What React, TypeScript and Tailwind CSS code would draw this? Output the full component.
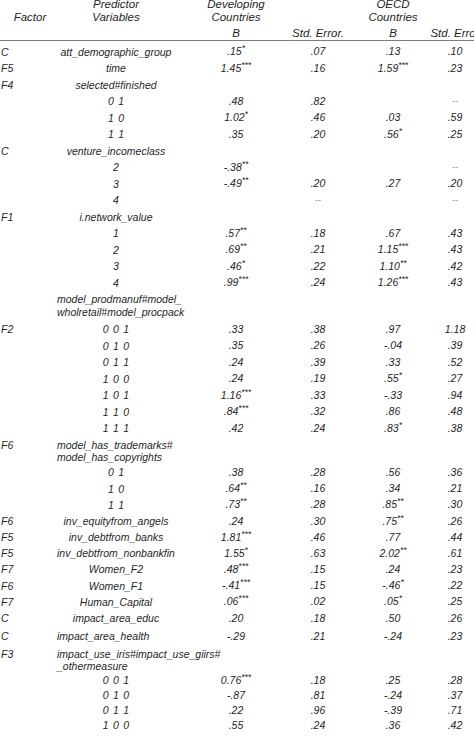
import React from 'react';

// Regression table: factor, predictor, B / SE for developing and OECD countries.

type Row = {
  f?: string;
  label: string | string[];
  left?: boolean;
  b1?: string;
  s1?: string;
  b2?: string;
  s2?: string;
  h: string;
  lead?: string;
};

const COLS = 'grid grid-cols-[56px_120px_120px_44px_106px_18px]';

const rows: Row[] = [
  { f: 'C', label: 'att_demographic_group', b1: '.15*', s1: '.07', b2: '.13', s2: '.10', h: 'h-[16.5px]' },
  { f: 'F5', label: 'time', b1: '1.45***', s1: '.16', b2: '1.59***', s2: '.23', h: 'h-[16.5px]' },
  { f: 'F4', label: 'selected#finished', h: 'h-[16.5px]' },
  { label: '0 1', b1: '.48', s1: '.82', s2: '--', h: 'h-[16.5px]' },
  { label: '1 0', b1: '1.02*', s1: '.46', b2: '.03', s2: '.59', h: 'h-[16.5px]' },
  { label: '1 1', b1: '.35', s1: '.20', b2: '.56*', s2: '.25', h: 'h-[16.5px]' },
  { f: 'C', label: 'venture_incomeclass', h: 'h-[16.5px]' },
  { label: '2', b1: '-.38**', s2: '--', h: 'h-[16.5px]' },
  { label: '3', b1: '-.49**', s1: '.20', b2: '.27', s2: '.20', h: 'h-[16.5px]' },
  { label: '4', s1: '--', s2: '--', h: 'h-[16.5px]' },
  { f: 'F1', label: 'i.network_value', h: 'h-[16.5px]' },
  { label: '1', b1: '.57**', s1: '.18', b2: '.67', s2: '.43', h: 'h-[16.5px]' },
  { label: '2', b1: '.69**', s1: '.21', b2: '1.15***', s2: '.43', h: 'h-[16.5px]' },
  { label: '3', b1: '.46*', s1: '.22', b2: '1.10**', s2: '.42', h: 'h-[16.5px]' },
  { label: '4', b1: '.99***', s1: '.24', b2: '1.26***', s2: '.43', h: 'h-[16.5px]' },
  { label: ['model_prodmanuf#model_', 'wholretail#model_procpack'], left: true, h: 'h-[30px]', lead: 'leading-[13px]' },
  { f: 'F2', label: '0 0 1', b1: '.33', s1: '.38', b2: '.97', s2: '1.18', h: 'h-[16.5px]' },
  { label: '0 1 0', b1: '.35', s1: '.26', b2: '-.04', s2: '.39', h: 'h-[16.5px]' },
  { label: '0 1 1', b1: '.24', s1: '.39', b2: '.33', s2: '.52', h: 'h-[16.5px]' },
  { label: '1 0 0', b1: '.24', s1: '.19', b2: '.55*', s2: '.27', h: 'h-[16.5px]' },
  { label: '1 0 1', b1: '1.16***', s1: '.33', b2: '-.33', s2: '.94', h: 'h-[16.5px]' },
  { label: '1 1 0', b1: '.84***', s1: '.32', b2: '.86', s2: '.48', h: 'h-[16.5px]' },
  { label: '1 1 1', b1: '.42', s1: '.24', b2: '.83*', s2: '.38', h: 'h-[16.5px]' },
  { f: 'F6', label: ['model_has_trademarks#', 'model_has_copyrights'], left: true, h: 'h-[28px]', lead: 'leading-[12px]' },
  { label: '0 1', b1: '.38', s1: '.28', b2: '.56', s2: '.36', h: 'h-[16.2px]' },
  { label: '1 0', b1: '.64**', s1: '.16', b2: '.34', s2: '.21', h: 'h-[16.2px]' },
  { label: '1 1', b1: '.73**', s1: '.28', b2: '.85**', s2: '.30', h: 'h-[16.2px]' },
  { f: 'F6', label: 'inv_equityfrom_angels', b1: '.24', s1: '.30', b2: '.75**', s2: '.26', h: 'h-[16.2px]' },
  { f: 'F5', label: 'inv_debtfrom_banks', b1: '1.81***', s1: '.46', b2: '.77', s2: '.44', h: 'h-[16.2px]' },
  { f: 'F5', label: 'inv_debtfrom_nonbankfin', b1: '1.55*', s1: '.63', b2: '2.02**', s2: '.61', h: 'h-[16.2px]' },
  { f: 'F7', label: 'Women_F2', b1: '.48***', s1: '.15', b2: '.24', s2: '.23', h: 'h-[16.2px]' },
  { f: 'F6', label: 'Women_F1', b1: '-.41***', s1: '.15', b2: '-.46*', s2: '.22', h: 'h-[16.2px]' },
  { f: 'F7', label: 'Human_Capital', b1: '.06***', s1: '.02', b2: '.05*', s2: '.25', h: 'h-[16.2px]' },
  { f: 'C', label: 'impact_area_educ', b1: '.20', s1: '.18', b2: '.50', s2: '.26', h: 'h-[16.2px]' },
  { f: 'C', label: 'impact_area_health', left: true, b1: '-.29', s1: '.21', b2: '-.24', s2: '.23', h: 'h-[20px]' },
  { f: 'F3', label: ['impact_use_iris#impact_use_giirs#', '_othermeasure'], left: true, h: 'h-[26px]', lead: 'leading-[12px]' },
  { label: '0 0 1', b1: '0.76***', s1: '.18', b2: '.25', s2: '.28', h: 'h-[15px]' },
  { label: '0 1 0', b1: '-.87', s1: '.81', b2: '-.24', s2: '.37', h: 'h-[15px]' },
  { label: '0 1 1', b1: '.22', s1: '.96', b2: '-.39', s2: '.71', h: 'h-[15px]' },
  { label: '1 0 0', b1: '.55', s1: '.24', b2: '.36', s2: '.42', h: 'h-[15px]' },
];

function Val({ v }: { v?: string }) {
  if (!v) return null;
  if (v === '--') return <span className="text-[9px] text-[#666]">--</span>;
  const m = v.match(/^(.*?)(\**)$/);
  const num = m ? m[1] : v;
  const stars = m ? m[2] : '';
  return (
    <span className="whitespace-nowrap">
      {num}
      {stars && <span className="text-[8.5px] leading-none align-top">{stars}</span>}
    </span>
  );
}

function Cell({ children }: { children?: React.ReactNode }) {
  return <div className="flex items-center justify-center whitespace-nowrap">{children}</div>;
}

function TableRow({ row }: { row: Row }) {
  const lines = Array.isArray(row.label) ? row.label : [row.label];
  const lead = row.lead ?? 'leading-[13px]';
  const code = /^[0-9 ]+$/.test(lines[0]);
  return (
    <div className={`${COLS} ${row.h}`}>
      <div className={`flex flex-col justify-center pl-[1px] ${lead}`}>
        <span>{row.f ?? '\u00a0'}</span>
        {lines.slice(1).map((_, i) => (
          <span key={i}>{'\u00a0'}</span>
        ))}
      </div>
      <div
        className={`flex flex-col justify-center whitespace-nowrap ${lead} ${row.left ? 'items-start pl-[1px]' : 'items-center'} ${code ? '[word-spacing:1.5px]' : ''}`}
      >
        {lines.map((l) => (
          <span key={l}>{l}</span>
        ))}
      </div>
      <Cell><Val v={row.b1} /></Cell>
      <Cell><Val v={row.s1} /></Cell>
      <Cell><Val v={row.b2} /></Cell>
      <Cell><Val v={row.s2} /></Cell>
    </div>
  );
}

export default function App() {
  return (
    <div className="w-[474px] h-[737px] overflow-hidden bg-white text-[#1f1f1f] italic font-['Liberation_Sans',Arial,sans-serif]">
      {/* header */}
      <div className={`${COLS} -mt-[2px] text-[11.5px] leading-[13px]`}>
        <div className="flex flex-col items-center pl-[4px]">
          <span>{'\u00a0'}</span>
          <span>Factor</span>
        </div>
        <div className="flex flex-col items-center">
          <span>Predictor</span>
          <span>Variables</span>
        </div>
        <div className="flex flex-col items-center">
          <span>Developing</span>
          <span>Countries</span>
        </div>
        <div />
        <div className="flex flex-col items-center">
          <span>OECD</span>
          <span>Countries</span>
        </div>
        <div />
      </div>
      <div className={`${COLS} h-[16px] pt-[2px] text-[11.5px] leading-[14px]`}>
        <div />
        <div />
        <Cell>B</Cell>
        <Cell>Std. Error.</Cell>
        <Cell>B</Cell>
        <Cell>Std. Error</Cell>
      </div>
      <div className="h-px bg-[#7c7c7c]" />

      <div className="pt-[2.75px] text-[10.5px]">
        {rows.map((r, i) => (
          <TableRow key={i} row={r} />
        ))}
      </div>
    </div>
  );
}
